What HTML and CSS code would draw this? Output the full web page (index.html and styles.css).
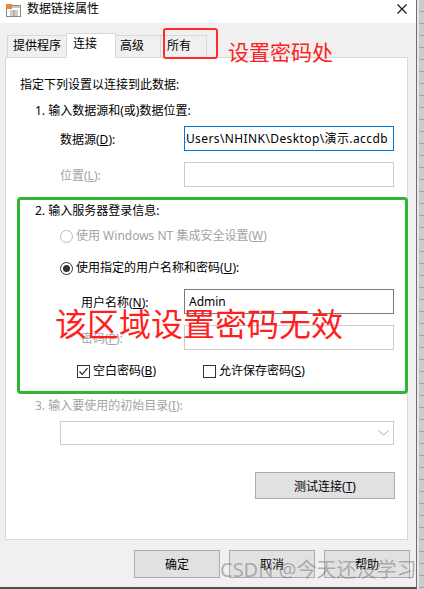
FILE: index.html
```html
<!DOCTYPE html>
<html lang="zh-CN">
<head>
    <meta charset="UTF-8">
    <meta name="viewport" content="width=device-width, initial-scale=1.0">
    <title>数据链接属性</title>
    <link rel="stylesheet" href="styles.css">
</head>
<body>
    <div class="screen">
        <div class="dialog">
            <div class="titlebar">
                <svg class="app-icon" width="15" height="13" viewBox="0 0 15 13">
                    <rect x="0.5" y="1.5" width="14" height="11" fill="#fff" stroke="#8a8a8a"></rect>
                    <rect x="1" y="2" width="13" height="2" fill="#c8c8c8"></rect>
                    <rect x="0" y="0" width="6" height="5" fill="#e8883a"></rect>
                    <path d="M4 7h8M4 9h8M4 11h8M8 6v6" stroke="#9a9a9a" stroke-width="1"></path>
                </svg>
                <span class="title">数据链接属性</span>
                <svg class="close" width="10" height="10" viewBox="0 0 10 10">
                    <path d="M0.5 0.5L9.5 9.5M9.5 0.5L0.5 9.5" stroke="#111" stroke-width="1.1"></path>
                </svg>
            </div>

            <div class="tabs">
                <div class="tab tab-provider">提供程序</div>
                <div class="tab tab-connect active">连接</div>
                <div class="tab tab-advanced">高级</div>
                <div class="tab tab-all">所有</div>
                <div class="mark-box"></div>
                <div class="mark-label">设置密码处</div>
            </div>

            <div class="panel">
                <p class="intro">指定下列设置以连接到此数据:</p>
                <p class="step">1. 输入数据源和(或)数据位置:</p>
                <div class="field">
                    <span class="field-label">数据源(<u>D</u>):</span>
                    <div class="input focus path"><span>C:\Users\NHINK\Desktop\演示.accdb</span></div>
                </div>
                <div class="field field-gap">
                    <span class="field-label muted">位置(<u>L</u>):</span>
                    <div class="input"></div>
                </div>

                <div class="group">
                    <p class="group-title">2. 输入服务器登录信息:</p>
                    <div class="option option-first muted">
                        <span class="radio off"></span>使用 Windows NT 集成安全设置(<u>W</u>)
                    </div>
                    <div class="option option-second">
                        <span class="radio on"></span>使用指定的用户名称和密码(<u>U</u>):
                    </div>
                    <div class="login-row">
                        <span class="login-label">用户名称(<u>N</u>):</span>
                        <div class="input active">Admin</div>
                    </div>
                    <div class="login-row login-gap">
                        <span class="login-label muted">密码(<u>P</u>):</span>
                        <div class="input"></div>
                    </div>
                    <div class="checks">
                        <label class="check-item">
                            <span class="check">
                                <svg width="11" height="11" viewBox="0 0 11 11"><path d="M1.5 5.5L4.2 8.3L9.5 2.2" fill="none" stroke="#222" stroke-width="1.2"></path></svg>
                            </span>空白密码(<u>B</u>)
                        </label>
                        <label class="check-item">
                            <span class="check"></span>允许保存密码(<u>S</u>)
                        </label>
                    </div>
                    <div class="mark-note">该区域设置密码无效</div>
                </div>

                <p class="step step-third muted">3. 输入要使用的初始目录(<u>I</u>):</p>
                <div class="combo">
                    <svg width="11" height="6" viewBox="0 0 11 6"><path d="M0.5 0.5L5.5 5L10.5 0.5" fill="none" stroke="#a8a8a8" stroke-width="1"></path></svg>
                </div>
                <button class="btn btn-test">测试连接(<u>T</u>)</button>
            </div>

            <div class="actions">
                <button class="btn">确定</button>
                <button class="btn">取消</button>
                <button class="btn">帮助</button>
            </div>

            <div class="watermark">CSDN @今天还没学习</div>
        </div>
        <div class="sheet"></div>
    </div>
</body>
</html>
```

FILE: styles.css
```css
* {
    margin: 0;
    padding: 0;
    box-sizing: border-box;
}

body {
    width: 424px;
    height: 589px;
    overflow: hidden;
    background: #4a4a4a;
    font-family: "Noto Sans", "Noto Sans CJK SC", sans-serif;
    font-size: 12px;
    color: #000;
}

u {
    text-decoration: underline;
    text-underline-offset: 1px;
}

.muted {
    color: #a3a3a3;
}

.screen {
    display: flex;
    height: 589px;
}

.dialog {
    position: relative;
    width: 417px;
    height: 588px;
    background: #f0f0f0;
    border-right: 1px solid #6e6e6e;
    border-bottom: 1px solid #555;
    display: flex;
    flex-direction: column;
}

.sheet {
    flex: 1;
    height: 589px;
    border-left: 2px solid #e6e6e6;
    background: repeating-linear-gradient(to bottom, #cbcbcb 0, #cbcbcb 11px, #a4a4a4 11px, #a4a4a4 12px);
}

/* title bar */
.titlebar {
    height: 23px;
    background: #fff;
    display: flex;
    align-items: flex-start;
    padding: 1px 0 0 6px;
}

.app-icon {
    margin: 3px 6px 0 0;
}

.title {
    flex: 1;
    line-height: 16px;
}

.close {
    margin: 3px 9px 0 0;
}

/* tabs */
.tabs {
    position: relative;
    height: 34px;
    display: flex;
    align-items: flex-end;
    padding-left: 7px;
}

.tab {
    height: 22px;
    line-height: 20px;
    border: 1px solid #d9d9d9;
    border-bottom: none;
    margin-right: -1px;
    background: #f0f0f0;
}

.tab.active {
    position: relative;
    top: 1px;
    z-index: 1;
    height: 25px;
    background: #fff;
}

.tab-provider { padding: 0 5px; }
.tab-connect { padding: 0 18px 0 6px; }
.tab-advanced { padding: 0 16px 0 4px; }
.tab-all { padding: 0 15px 0 6px; }

.mark-box {
    position: absolute;
    left: 163px;
    top: 5px;
    width: 55px;
    height: 31px;
    border: 2px solid #ff2b2b;
    border-radius: 3px;
    z-index: 2;
}

.mark-label {
    position: absolute;
    left: 228px;
    top: 16px;
    font-family: "Noto Sans CJK SC", sans-serif;
    font-size: 21px;
    line-height: 24px;
    color: #ff2020;
    z-index: 2;
}

/* connection panel */
.panel {
    position: relative;
    height: 483px;
    margin: 0 8px 0 5px;
    background: #fff;
    border: 1px solid #d9d9d9;
    padding-left: 14px;
}

.intro {
    margin-top: 19px;
    line-height: 16px;
}

.step {
    margin: 10px 0 0 15px;
    line-height: 16px;
}

.step-third {
    margin-top: 4px;
}

.field {
    display: flex;
    align-items: center;
    margin-top: 7px;
    padding-left: 40px;
}

.field-gap {
    margin-top: 11px;
}

.field-label {
    width: 124px;
}

.input {
    width: 210px;
    height: 25px;
    border: 1px solid #cccccc;
    background: #fff;
    padding: 0 4px;
    line-height: 23px;
    white-space: nowrap;
    overflow: hidden;
}

.input.focus {
    border-color: #0078d7;
}

.input.active {
    border-color: #7a7a7a;
}

.input.path {
    display: flex;
    justify-content: flex-end;
    padding-right: 5px;
    letter-spacing: 0.4px;
}

/* login group */
.group {
    position: relative;
    width: 391px;
    margin: 10px 0 0 -3px;
    border: 3px solid #2fb52f;
    border-radius: 4px;
    padding: 3px 0 12px 15px;
}

.group-title {
    line-height: 16px;
}

.option {
    display: flex;
    align-items: center;
    line-height: 16px;
    margin-left: 25px;
}

.option-first { margin-top: 9px; }
.option-second { margin-top: 16px; }

.radio {
    width: 13px;
    height: 13px;
    border: 1px solid #333;
    border-radius: 50%;
    margin-right: 3px;
    display: flex;
    align-items: center;
    justify-content: center;
}

.radio.off {
    border-color: #bcbcbc;
}

.radio.on::after {
    content: "";
    width: 7px;
    height: 7px;
    border-radius: 50%;
    background: #333;
}

.login-row {
    display: flex;
    align-items: center;
    margin-top: 13px;
    padding-left: 46px;
}

.login-gap {
    margin-top: 11px;
}

.login-label {
    width: 103px;
}

.checks {
    display: flex;
    margin-top: 13px;
    padding-left: 42px;
    line-height: 16px;
}

.check-item {
    display: flex;
    align-items: center;
    width: 126px;
}

.check {
    width: 13px;
    height: 13px;
    border: 1px solid #333;
    margin-right: 3px;
    display: flex;
    align-items: center;
    justify-content: center;
}

.mark-note {
    position: absolute;
    left: 35px;
    top: 104px;
    font-family: "Noto Sans CJK SC", sans-serif;
    font-size: 32px;
    line-height: 36px;
    color: #ff1f1f;
}

.combo {
    width: 334px;
    height: 24px;
    margin: 7px 0 0 40px;
    border: 1px solid #cccccc;
    display: flex;
    align-items: center;
    justify-content: flex-end;
    padding-right: 4px;
}

/* buttons */
.btn {
    width: 86px;
    height: 28px;
    background: #e1e1e1;
    border: 1px solid #adadad;
    font-family: "Noto Sans", "Noto Sans CJK SC", sans-serif;
    font-size: 12px;
    color: #000;
}

.btn-test {
    display: block;
    width: 140px;
    height: 27px;
    margin: 27px 0 0 235px;
}

.actions {
    display: flex;
    justify-content: flex-end;
    gap: 9px;
    margin-top: 10px;
    padding-right: 6px;
}

.watermark {
    position: absolute;
    left: 220px;
    top: 558px;
    font-family: "Noto Sans", "Noto Sans CJK SC", sans-serif;
    font-size: 20px;
    line-height: 24px;
    color: rgba(120, 120, 120, 0.55);
    white-space: nowrap;
}
```
